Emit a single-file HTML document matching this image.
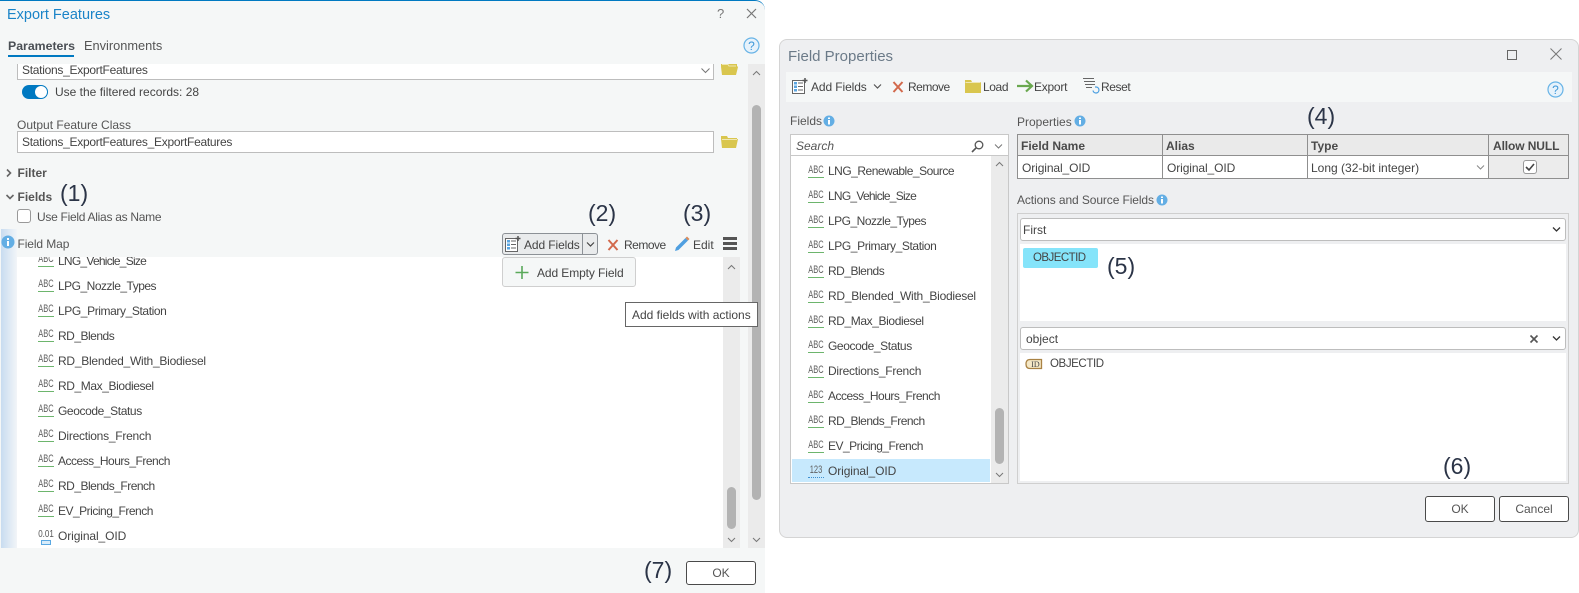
<!DOCTYPE html>
<html><head><meta charset="utf-8"><style>
html,body{margin:0;padding:0;background:#fff}
#p{position:relative;width:1579px;height:593px;overflow:hidden;background:#fff;font-family:"Liberation Sans",sans-serif;font-size:12px;color:#444}
#p div,#p span,#p svg{position:absolute;box-sizing:border-box}
.t{white-space:nowrap;line-height:16px;height:16px}
.b{font-weight:bold;color:#555}
.n{font-size:23px;line-height:24px;height:24px;color:#2b3447;white-space:nowrap}
.abc{width:16px;height:13px;border-bottom:1.5px solid #6db56d}
.abc span{left:-4px;top:-1px;width:24px;text-align:center;font-size:11px;line-height:12px;color:#5f5f5f;transform:scaleX(.68)}
.in{background:#fff;border:1px solid #bdbdbd}
.cb{background:#fff;border:1px solid #c0c0c0;border-radius:3px}
.sb{background:#ebebeb}
.th{background:#b3b3b3;border-radius:5px}
.btn{background:#fff;border:1px solid #4a4a4a;border-radius:3px;text-align:center;line-height:23px;color:#555}
.c{background:#eaeaea;border:1px solid #8f8f8f}
.l5{letter-spacing:-.5px}.l4{letter-spacing:-.4px}.l3{letter-spacing:-.28px}.l2{letter-spacing:-.25px}.l1{letter-spacing:-.1px}.l6{letter-spacing:-.75px}
</style></head><body><div id="p">

<!-- LEFT DIALOG -->
<div style="left:-8px;top:0;width:773px;height:600px;background:#f5f7f7;border-top:1.5px solid #0079c1;border-radius:8px 10px 0 0"></div>
<div class="t" style="left:7px;top:7px;font-size:14.5px;color:#1a84c8">Export Features</div>
<svg style="left:715px;top:6px" width="44" height="14" viewBox="0 0 44 14"><text x="2" y="12" font-family="Liberation Sans" font-size="13" fill="#777">?</text><path d="M32 3l9 9M41 3l-9 9" stroke="#777" stroke-width="1.200" fill="none"/></svg>
<div class="t b" style="left:8px;top:38px;font-size:12.3px;color:#4a4f55">Parameters</div>
<div style="left:8px;top:55px;width:66px;height:2px;background:#0079c1"></div>
<div class="t" style="left:84px;top:38px;font-size:12.8px;color:#555">Environments</div>
<svg style="left:743px;top:37px" width="17" height="17" viewBox="0 0 17 17"><circle cx="8.500" cy="8.500" r="7.500" fill="#e6f2fb" stroke="#67b3e6" stroke-width="1.200"/><text x="8.500" y="13" text-anchor="middle" font-family="Liberation Sans" font-size="12" fill="#3d97d8">?</text></svg>

<div class="in" style="left:17px;top:64px;width:697px;height:16px;border-top:0"></div>
<div class="t l3" style="left:22px;top:62px;">Stations_ExportFeatures</div>
<svg style="left:700px;top:67px" width="11" height="7" viewBox="0 0 11 7"><path d="M1.500 1.500l4 4 4-4" stroke="#777" fill="none"/></svg>
<svg style="left:721px;top:64px" width="17" height="11" viewBox="0 0 17 11"><path d="M0 0h16v2l1 1-2 8H1l-1-8z" fill="#d9c64e"/><path d="M1 0.500h6l1 1.500h7" stroke="#efe7b4" fill="none"/></svg>
<div style="left:22px;top:85px;width:26px;height:14px;border-radius:7px;background:#0079c1"></div>
<div style="left:35px;top:86px;width:12px;height:12px;border-radius:6px;background:#fff"></div>
<div class="t" style="left:55px;top:84px">Use the filtered records: 28</div>
<div class="t" style="left:17px;top:117px;color:#555">Output Feature Class</div>
<div class="in" style="left:17px;top:131px;width:697px;height:22px"></div>
<div class="t l3" style="left:22px;top:134px">Stations_ExportFeatures_ExportFeatures</div>
<svg style="left:721px;top:136px" width="17" height="12" viewBox="0 0 17 12"><path d="M0 0h6l1 2h9v1l1 0-2 9H1l-1-9z" fill="#d9c64e"/><path d="M1 3.500h15" stroke="#efe7b4" fill="none"/></svg>
<svg style="left:5px;top:168px" width="8" height="10" viewBox="0 0 8 10"><path d="M2 1.500l3.500 3.500L2 8.500" stroke="#666" stroke-width="1.600" fill="none"/></svg>
<div class="t b" style="left:17.500px;top:165px">Filter</div>
<svg style="left:5px;top:193px" width="10" height="8" viewBox="0 0 10 8"><path d="M1.500 2l3.500 3.500L8.500 2" stroke="#666" stroke-width="1.600" fill="none"/></svg>
<div class="t b" style="left:17.500px;top:189px">Fields</div>
<div class="n" style="left:60px;top:181px">(1)</div>
<div class="cb" style="left:17px;top:209px;width:14px;height:14px;border-color:#999"></div>
<div class="t l3" style="left:37px;top:209px;color:#555">Use Field Alias as Name</div>

<div style="left:1px;top:229px;width:16px;height:319px;background:linear-gradient(90deg,#c8dcf0,#f2f5f8)"></div>
<svg style="left:1px;top:235px" width="14" height="14" viewBox="0 0 14 14"><circle cx="7" cy="7" r="6.500" fill="#63aee4"/><rect x="6" y="6" width="2" height="5" fill="#fff"/><rect x="6" y="3" width="2" height="2" fill="#fff"/></svg>
<div class="t l1" style="left:17.500px;top:236px;color:#555">Field Map</div>

<div style="left:17px;top:257px;width:706px;height:291px;background:#fff;overflow:hidden">
<div class="abc" style="left:21px;top:-3px"><span>ABC</span></div><div class="t l6" style="left:41px;top:-4px">LNG_Vehicle_Size</div>
<div class="abc" style="left:21px;top:22px"><span>ABC</span></div><div class="t l5" style="left:41px;top:21px">LPG_Nozzle_Types</div>
<div class="abc" style="left:21px;top:47px"><span>ABC</span></div><div class="t l4" style="left:41px;top:46px">LPG_Primary_Station</div>
<div class="abc" style="left:21px;top:72px"><span>ABC</span></div><div class="t l5" style="left:41px;top:71px">RD_Blends</div>
<div class="abc" style="left:21px;top:97px"><span>ABC</span></div><div class="t l2" style="left:41px;top:96px">RD_Blended_With_Biodiesel</div>
<div class="abc" style="left:21px;top:122px"><span>ABC</span></div><div class="t l4" style="left:41px;top:121px">RD_Max_Biodiesel</div>
<div class="abc" style="left:21px;top:147px"><span>ABC</span></div><div class="t l4" style="left:41px;top:146px">Geocode_Status</div>
<div class="abc" style="left:21px;top:172px"><span>ABC</span></div><div class="t l2" style="left:41px;top:171px">Directions_French</div>
<div class="abc" style="left:21px;top:197px"><span>ABC</span></div><div class="t l5" style="left:41px;top:196px">Access_Hours_French</div>
<div class="abc" style="left:21px;top:222px"><span>ABC</span></div><div class="t l5" style="left:41px;top:221px">RD_Blends_French</div>
<div class="abc" style="left:21px;top:247px"><span>ABC</span></div><div class="t l5" style="left:41px;top:246px">EV_Pricing_French</div>
<div class="t" style="left:19px;top:272px;font-size:10px;color:#555;width:20px;text-align:center;line-height:11px;height:11px;transform:scaleX(.8)">0.01</div>
<div style="left:24px;top:283px;width:10px;height:5px;background:#d8ecfa;border:1px solid #5aa8e2"></div>
<div class="t l1" style="left:41px;top:271px">Original_OID</div>
</div>

<div class="sb" style="left:723px;top:257px;width:17px;height:291px"></div>
<div class="th" style="left:727px;top:487px;width:9px;height:42px"></div>
<svg style="left:726px;top:264px" width="11" height="7" viewBox="0 0 11 7"><path d="M2 5l3.500-3.500L9 5" stroke="#777" fill="none"/></svg>
<svg style="left:726px;top:536px" width="11" height="7" viewBox="0 0 11 7"><path d="M2 2l3.500 3.500L9 2" stroke="#777" fill="none"/></svg>
<div class="sb" style="left:748px;top:64px;width:17px;height:484px"></div>
<div class="th" style="left:752px;top:105px;width:9px;height:395px"></div>
<svg style="left:751px;top:70px" width="11" height="7" viewBox="0 0 11 7"><path d="M2 5l3.500-3.500L9 5" stroke="#777" fill="none"/></svg>
<svg style="left:751px;top:536px" width="11" height="7" viewBox="0 0 11 7"><path d="M2 2l3.500 3.500L9 2" stroke="#777" fill="none"/></svg>

<div class="n" style="left:588px;top:201px">(2)</div>
<div class="n" style="left:683px;top:201px">(3)</div>
<div style="left:502px;top:233px;width:96px;height:22px;background:#e9ebec;border:1px solid #8c9196;border-radius:3px"></div>
<div style="left:582px;top:234px;width:1px;height:20px;background:#8c9196"></div>
<svg style="left:505px;top:236px" width="16" height="16" viewBox="0 0 16 16"><rect x="0.500" y="2.500" width="12" height="13" fill="#fff" stroke="#666"/><rect x="2" y="4" width="3" height="2.500" fill="#5aa5e0"/><rect x="2" y="7.500" width="3" height="2.500" fill="#5aa5e0"/><rect x="2" y="11" width="3" height="2.500" fill="#5aa5e0"/><path d="M6 5h5M6 8.500h5M6 12h5" stroke="#666"/><path d="M13 0v5M10.500 2.500h5" stroke="#555" stroke-width="1.500"/></svg>
<div class="t l1" style="left:524px;top:237px;">Add Fields</div>
<svg style="left:585px;top:241px" width="11" height="7" viewBox="0 0 11 7"><path d="M2 1.500l3.500 3.500L9 1.500" stroke="#444" stroke-width="1.200" fill="none"/></svg>
<svg style="left:607px;top:239px" width="12" height="12" viewBox="0 0 12 12"><path d="M1.500 1l9 10M10.500 1l-9 10" stroke="#d2694c" stroke-width="2" fill="none"/></svg>
<div class="t l5" style="left:624px;top:237px">Remove</div>
<svg style="left:674px;top:236px" width="16" height="16" viewBox="0 0 16 16"><path d="M2 11.500L11.500 2l2.500 2.500L4.500 14 1 15z" fill="#4f9fe0"/><path d="M11.500 2L13 .5l2.500 2.500L14 4.500z" fill="#d88a5a"/></svg>
<div class="t" style="left:693px;top:237px">Edit</div>
<div style="left:723px;top:237px;width:14px;height:3px;background:#555"></div>
<div style="left:723px;top:242px;width:14px;height:3px;background:#555"></div>
<div style="left:723px;top:247px;width:14px;height:3px;background:#555"></div>
<div style="left:502px;top:257px;width:134px;height:30px;background:#f5f7f7;border:1px solid #cfcfcf;border-radius:3px"></div>
<svg style="left:515px;top:266px" width="14" height="13" viewBox="0 0 14 13"><path d="M7 0v13M.5 6.500h13" stroke="#5aa95a" stroke-width="1.600"/></svg>
<div class="t l1" style="left:537px;top:265px">Add Empty Field</div>
<div style="left:625px;top:302px;width:133px;height:25px;background:#fff;border:1px solid #666"></div>
<div class="t" style="left:632px;top:307px">Add fields with actions</div>
<div class="n" style="left:644px;top:558px">(7)</div>
<div class="btn" style="left:686px;top:561px;width:70px;height:24px">OK</div>

<!-- RIGHT DIALOG -->
<div style="left:779px;top:39px;width:800px;height:499px;background:#eeeff1;border:1px solid #d4d4d4;border-radius:8px"></div>
<div class="t" style="left:788px;top:49px;font-size:15px;color:#6b7a88">Field Properties</div>
<div style="left:1507px;top:50px;width:10px;height:10px;border:1px solid #666"></div>
<svg style="left:1550px;top:48px" width="12" height="12" viewBox="0 0 12 12"><path d="M.5.500l11 11M11.500.500l-11 11" stroke="#777" fill="none"/></svg>
<div style="left:786px;top:72px;width:786px;height:30px;background:#f5f7f7"></div>
<svg style="left:792px;top:78px" width="16" height="16" viewBox="0 0 16 16"><rect x="0.500" y="2.500" width="12" height="13" fill="#fff" stroke="#666"/><rect x="2" y="4" width="3" height="2.500" fill="#5aa5e0"/><rect x="2" y="7.500" width="3" height="2.500" fill="#5aa5e0"/><rect x="2" y="11" width="3" height="2.500" fill="#5aa5e0"/><path d="M6 5h5M6 8.500h5M6 12h5" stroke="#666"/><path d="M13 0v5M10.500 2.500h5" stroke="#555" stroke-width="1.500"/></svg>
<div class="t l1" style="left:811px;top:79px">Add Fields</div>
<svg style="left:872px;top:83px" width="11" height="7" viewBox="0 0 11 7"><path d="M2 1.500l3.500 3.500L9 1.500" stroke="#555" stroke-width="1.200" fill="none"/></svg>
<svg style="left:892px;top:81px" width="12" height="12" viewBox="0 0 12 12"><path d="M1.500 1l9 10M10.500 1l-9 10" stroke="#d2694c" stroke-width="2" fill="none"/></svg>
<div class="t l5" style="left:908px;top:79px">Remove</div>
<svg style="left:965px;top:80px" width="16" height="13" viewBox="0 0 16 13"><path d="M0 0h6l1 2h9v11H0z" fill="#d9c64e"/><path d="M.5 2.500h15" stroke="#efe7b4" fill="none"/></svg>
<div class="t l4" style="left:983px;top:79px">Load</div>
<svg style="left:1017px;top:79px" width="17" height="14" viewBox="0 0 17 14"><path d="M0 7h14M9 1.500l6 5.500-6 5.500" stroke="#6aa84f" stroke-width="2.200" fill="none"/></svg>
<div class="t l2" style="left:1034px;top:79px">Export</div>
<svg style="left:1083px;top:77px" width="18" height="17" viewBox="0 0 18 17"><path d="M0 1.500h11M1 4.500h11M2 7.500h10M3 10.500h6" stroke="#666" fill="none"/><path d="M10 13.500a3 3 0 1 0 3-3.500h-1" stroke="#4a9ee0" stroke-width="1.200" fill="none"/></svg>
<div class="t l4" style="left:1101px;top:79px">Reset</div>
<svg style="left:1547px;top:81px" width="17" height="17" viewBox="0 0 17 17"><circle cx="8.500" cy="8.500" r="7.500" fill="#e6f2fb" stroke="#67b3e6" stroke-width="1.200"/><text x="8.500" y="13" text-anchor="middle" font-family="Liberation Sans" font-size="12" fill="#3d97d8">?</text></svg>

<div class="t" style="left:790px;top:113px;color:#555">Fields</div>
<svg style="left:823px;top:115px" width="12" height="12" viewBox="0 0 12 12"><circle cx="6" cy="6" r="5.500" fill="#63aee4"/><rect x="5" y="5" width="2" height="4.500" fill="#fff"/><rect x="5" y="2.500" width="2" height="1.500" fill="#fff"/></svg>
<div style="left:790px;top:134px;width:219px;height:350px;background:#ebebeb;border:1px solid #c8c8c8"></div>
<div style="left:791px;top:135px;width:217px;height:21px;background:#fff;border-bottom:1px solid #c8c8c8"></div>
<div class="t" style="left:796px;top:138px;font-style:italic;color:#555">Search</div>
<svg style="left:971px;top:140px" width="13" height="13" viewBox="0 0 13 13"><circle cx="8" cy="5" r="3.800" stroke="#555" stroke-width="1.300" fill="none"/><path d="M5.200 7.800L1 12" stroke="#555" stroke-width="1.600"/></svg>
<svg style="left:993px;top:143px" width="11" height="7" viewBox="0 0 11 7"><path d="M2 1.500l3.500 3.500L9 1.500" stroke="#777" fill="none"/></svg>
<div style="left:791px;top:156px;width:200px;height:327px;background:#fff"></div>
<div style="left:792px;top:459px;width:198px;height:23px;background:#c7e9fd"></div>
<svg style="left:994px;top:161px" width="11" height="7" viewBox="0 0 11 7"><path d="M2 5l3.500-3.500L9 5" stroke="#777" fill="none"/></svg>
<div class="th" style="left:995px;top:408px;width:9px;height:56px"></div>
<svg style="left:994px;top:471px" width="11" height="7" viewBox="0 0 11 7"><path d="M2 2l3.500 3.500L9 2" stroke="#777" fill="none"/></svg>

<div class="abc" style="left:808px;top:165px"><span>ABC</span></div><div class="t l5" style="left:828px;top:163px">LNG_Renewable_Source</div>
<div class="abc" style="left:808px;top:190px"><span>ABC</span></div><div class="t l6" style="left:828px;top:188px">LNG_Vehicle_Size</div>
<div class="abc" style="left:808px;top:215px"><span>ABC</span></div><div class="t l5" style="left:828px;top:213px">LPG_Nozzle_Types</div>
<div class="abc" style="left:808px;top:240px"><span>ABC</span></div><div class="t l4" style="left:828px;top:238px">LPG_Primary_Station</div>
<div class="abc" style="left:808px;top:265px"><span>ABC</span></div><div class="t l5" style="left:828px;top:263px">RD_Blends</div>
<div class="abc" style="left:808px;top:290px"><span>ABC</span></div><div class="t l2" style="left:828px;top:288px">RD_Blended_With_Biodiesel</div>
<div class="abc" style="left:808px;top:315px"><span>ABC</span></div><div class="t l4" style="left:828px;top:313px">RD_Max_Biodiesel</div>
<div class="abc" style="left:808px;top:340px"><span>ABC</span></div><div class="t l4" style="left:828px;top:338px">Geocode_Status</div>
<div class="abc" style="left:808px;top:365px"><span>ABC</span></div><div class="t l2" style="left:828px;top:363px">Directions_French</div>
<div class="abc" style="left:808px;top:390px"><span>ABC</span></div><div class="t l5" style="left:828px;top:388px">Access_Hours_French</div>
<div class="abc" style="left:808px;top:415px"><span>ABC</span></div><div class="t l5" style="left:828px;top:413px">RD_Blends_French</div>
<div class="abc" style="left:808px;top:440px"><span>ABC</span></div><div class="t l5" style="left:828px;top:438px">EV_Pricing_French</div>
<div class="abc" style="left:808px;top:465px;border-bottom:1px dotted #3d8fd0"><span>123</span></div><div class="t l1" style="left:828px;top:463px">Original_OID</div>

<div class="t" style="left:1017px;top:114px;color:#555">Properties</div>
<svg style="left:1074px;top:115px" width="12" height="12" viewBox="0 0 12 12"><circle cx="6" cy="6" r="5.500" fill="#63aee4"/><rect x="5" y="5" width="2" height="4.500" fill="#fff"/><rect x="5" y="2.500" width="2" height="1.500" fill="#fff"/></svg>
<div class="n" style="left:1307px;top:104px">(4)</div>
<div class="c" style="left:1017px;top:134px;width:146px;height:22px"></div>
<div class="c" style="left:1162px;top:134px;width:146px;height:22px"></div>
<div class="c" style="left:1307px;top:134px;width:182px;height:22px"></div>
<div class="c" style="left:1488px;top:134px;width:81px;height:22px"></div>
<div class="c" style="left:1017px;top:155px;width:146px;height:24px;background:#fff"></div>
<div class="c" style="left:1162px;top:155px;width:146px;height:24px;background:#fff"></div>
<div class="c" style="left:1307px;top:155px;width:182px;height:24px;background:#fff"></div>
<div class="c" style="left:1488px;top:155px;width:81px;height:24px;background:#ececec"></div>
<div class="t b" style="left:1021px;top:138px;color:#4a4a4a">Field Name</div>
<div class="t b" style="left:1166px;top:138px;color:#4a4a4a">Alias</div>
<div class="t b" style="left:1311px;top:138px;color:#4a4a4a">Type</div>
<div class="t b" style="left:1493px;top:138px;color:#4a4a4a;font-size:12px;letter-spacing:-.1px">Allow NULL</div>
<div class="t l1" style="left:1022px;top:160px">Original_OID</div>
<div class="t l1" style="left:1167px;top:160px">Original_OID</div>
<div class="t" style="left:1311px;top:160px">Long (32-bit integer)</div>
<svg style="left:1475px;top:164px" width="11" height="7" viewBox="0 0 11 7"><path d="M2 1.500l3.500 3.500L9 1.500" stroke="#888" fill="none"/></svg>
<div class="cb" style="left:1523px;top:160px;width:14px;height:14px;border-color:#999"></div>
<svg style="left:1525px;top:162px" width="10" height="10" viewBox="0 0 10 10"><path d="M1 5l3 3 5-6" stroke="#444" stroke-width="1.600" fill="none"/></svg>

<div class="t l1" style="left:1017px;top:192px;color:#555">Actions and Source Fields</div>
<svg style="left:1156px;top:194px" width="12" height="12" viewBox="0 0 12 12"><circle cx="6" cy="6" r="5.500" fill="#63aee4"/><rect x="5" y="5" width="2" height="4.500" fill="#fff"/><rect x="5" y="2.500" width="2" height="1.500" fill="#fff"/></svg>
<div style="left:1017px;top:213px;width:552px;height:271px;background:#eeeff1;border:1px solid #cfcfcf"></div>
<div class="cb" style="left:1020px;top:218px;width:546px;height:23px;border-color:#bdbdbd"></div>
<div class="t" style="left:1023px;top:222px">First</div>
<svg style="left:1551px;top:226px" width="11" height="7" viewBox="0 0 11 7"><path d="M2 1.500l3.500 3.500L9 1.500" stroke="#333" stroke-width="1.300" fill="none"/></svg>
<div style="left:1020px;top:244px;width:546px;height:77px;background:#fff"></div>
<div style="left:1023px;top:248px;width:75px;height:20px;background:#85e4fa;border-radius:2px"></div>
<div class="t" style="left:1033px;top:250px;font-size:11.500px;letter-spacing:-.55px">OBJECTID</div>
<div class="n" style="left:1107px;top:254px">(5)</div>
<div class="cb" style="left:1020px;top:327px;width:546px;height:23px;border-color:#bdbdbd"></div>
<div class="t" style="left:1026px;top:331px">object</div>
<svg style="left:1529px;top:334px" width="10" height="10" viewBox="0 0 10 10"><path d="M1.500 1.500l7 7M8.500 1.500l-7 7" stroke="#555" stroke-width="1.600" fill="none"/></svg>
<svg style="left:1551px;top:335px" width="11" height="7" viewBox="0 0 11 7"><path d="M2 1.500l3.500 3.500L9 1.500" stroke="#333" stroke-width="1.300" fill="none"/></svg>
<div style="left:1020px;top:353px;width:546px;height:128px;background:#fff"></div>
<svg style="left:1025px;top:358px" width="18" height="12" viewBox="0 0 18 12"><path d="M16.500 1.500H5Q1 1.500 1 6T5 10.500H16.500z" fill="#f5e8c6" stroke="#a98244" stroke-width="1.300"/><text x="10.500" y="9" text-anchor="middle" font-family="Liberation Serif" font-size="8" fill="#444">ID</text></svg>
<div class="t" style="left:1050px;top:356px;font-size:11.500px;letter-spacing:-.4px">OBJECTID</div>
<div class="n" style="left:1443px;top:454px">(6)</div>
<div class="btn" style="left:1425px;top:496px;width:70px;height:26px;line-height:25px">OK</div>
<div class="btn" style="left:1499px;top:496px;width:70px;height:26px;line-height:25px">Cancel</div>
</div></body></html>
